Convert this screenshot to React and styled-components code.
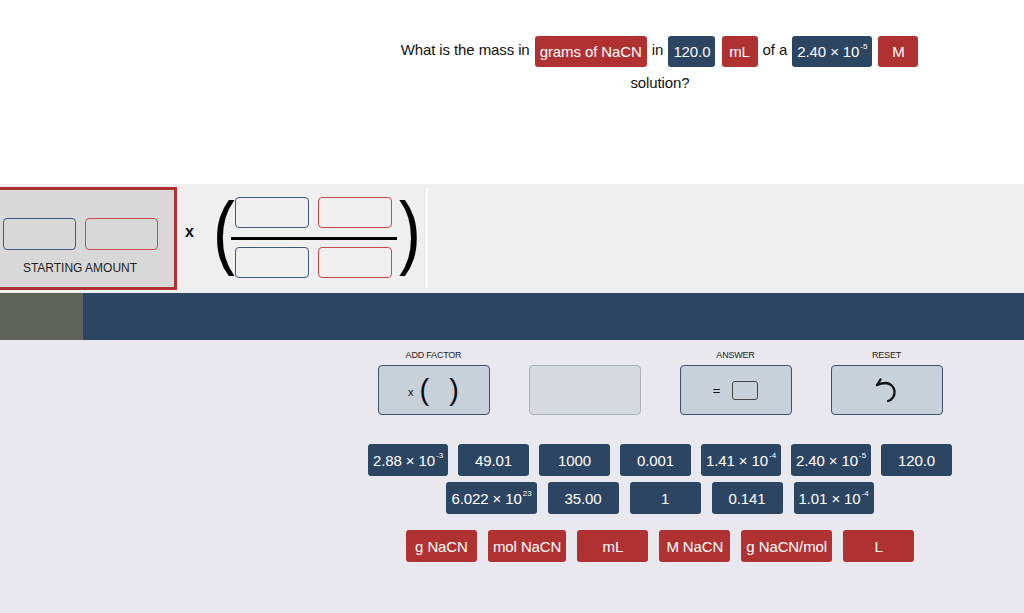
import React from "react";
import styled, { createGlobalStyle } from "styled-components";

const NAVY = "#2c4563";
const RED = "#b03132";

const GlobalStyle = createGlobalStyle`
  html, body {
    margin: 0;
    padding: 0;
    background: #ffffff;
    font-family: "Liberation Sans", Arial, sans-serif;
    color: #111;
  }
  * { box-sizing: border-box; }
`;

const Page = styled.div`
  width: 1024px;
  height: 613px;
  display: flex;
  flex-direction: column;
  overflow: hidden;
`;

const QuestionArea = styled.div`
  height: 184px;
  padding: 34px 0 0 296px;
  display: flex;
  justify-content: center;
`;

const Question = styled.div`
  width: 540px;
  text-align: center;
  font-size: 15px;
  line-height: 32px;
  letter-spacing: -0.1px;
`;

const Chip = styled.span`
  display: inline-block;
  vertical-align: middle;
  height: 31px;
  line-height: 31px;
  min-width: ${(p) => p.$min || 0}px;
  padding: 0 5px;
  margin: 0 1px;
  border-radius: 3px;
  color: #fff;
  background: ${(p) => (p.$red ? RED : NAVY)};
  text-align: center;
`;

const Sup = styled.sup`
  font-size: 8px;
  vertical-align: top;
  position: relative;
  top: -5px;
  margin-left: 1px;
`;

const Workspace = styled.div`
  height: 109px;
  background: #efefef;
  display: flex;
  align-items: flex-start;
`;

const StartBox = styled.div`
  margin: 3px 0 0 -3px;
  width: 180px;
  height: 103px;
  background: #d8d8d8;
  border: 3px solid ${RED};
  padding: 28px 14px 0 0;
  display: flex;
  flex-direction: column;
  align-items: center;
`;

const SlotRow = styled.div`
  display: flex;
  gap: 9px;
`;

const Slot = styled.div`
  width: ${(p) => p.$w || 73}px;
  height: ${(p) => p.$h || 32}px;
  border: 1px solid ${(p) => (p.$red ? "#c9494a" : "#3d5a7e")};
  border-radius: 4px;
`;

const StartLabel = styled.div`
  margin-top: 11px;
  font-size: 12px;
  color: #222;
`;

const Times = styled.div`
  margin: 39px 0 0 8px;
  font-size: 16px;
  font-weight: bold;
  color: #111;
`;

const Paren = styled.div`
  width: 20px;
  font-size: 82px;
  line-height: 82px;
  margin-top: 6px;
  text-align: center;
  transform: scaleX(0.8);
  color: #000;
`;

const Fraction = styled.div`
  margin-top: 13px;
  display: flex;
  flex-direction: column;
  align-items: center;
`;

const FracLine = styled.div`
  width: 166px;
  height: 3px;
  background: #000;
  margin: 9px 0 7px;
`;

const Divider = styled.div`
  width: 4px;
  height: 100px;
  margin: 4px 0 0 7px;
  background: #ffffff;
  border-left: 1px solid #e4e4e4;
`;

const DarkBar = styled.div`
  height: 47px;
  display: flex;
  background: ${NAVY};
`;

const DarkLeft = styled.div`
  width: 83px;
  background: #5e6259;
`;

const Tray = styled.div`
  flex: 1;
  background: #e9e8ee;
  padding: 9px 0 0 296px;
  display: flex;
  flex-direction: column;
  align-items: center;
`;

const Controls = styled.div`
  display: flex;
  gap: 39px;
`;

const Control = styled.div`
  width: 112px;
  display: flex;
  flex-direction: column;
  align-items: center;
`;

const ControlLabel = styled.div`
  height: 16px;
  font-size: 9px;
  letter-spacing: -0.2px;
  color: #222;
  line-height: 12px;
`;

const ActionButton = styled.div`
  width: 112px;
  height: 50px;
  border-radius: 4px;
  border: 1px solid ${(p) => (p.$disabled ? "#a9b1bd" : "#3e5169")};
  background: ${(p) => (p.$disabled ? "#d6dae0" : "#c8d0da")};
  display: flex;
  align-items: center;
  justify-content: center;
  color: #111;
`;

const SmallX = styled.span`
  font-size: 11px;
  margin: 3px 6px 0 0;
`;

const BtnParen = styled.span`
  font-size: 29px;
  line-height: 29px;
  margin-right: ${(p) => p.$gap || 0}px;
`;

const AnswerBox = styled.span`
  width: 26px;
  height: 19px;
  border: 1.5px solid #444;
  border-radius: 3px;
  margin-left: 12px;
`;

const Tiles = styled.div`
  margin-top: ${(p) => p.$top}px;
  display: flex;
  gap: ${(p) => p.$gap || 10}px;
  justify-content: center;
`;

const Tile = styled.div`
  height: 32px;
  min-width: 71px;
  padding: 0 5px;
  border-radius: 3px;
  background: ${(p) => (p.$red ? RED : NAVY)};
  color: #fff;
  font-size: 15px;
  letter-spacing: -0.1px;
  display: flex;
  align-items: center;
  justify-content: center;
  white-space: nowrap;
`;

const Sci = ({ m, e }) => (
  <>
    {m} × 10<Sup>{e}</Sup>
  </>
);

const row1 = [
  <Sci m="2.88" e="-3" />,
  "49.01",
  "1000",
  "0.001",
  <Sci m="1.41" e="-4" />,
  <Sci m="2.40" e="-5" />,
  "120.0",
];
const row2 = [<Sci m="6.022" e="23" />, "35.00", "1", "0.141", <Sci m="1.01" e="-4" />];
const units = ["g NaCN", "mol NaCN", "mL", "M NaCN", "g NaCN/mol", "L"];

const ResetIcon = () => (
  <svg width="26" height="28" viewBox="0 0 26 28" fill="none" stroke="#111" strokeWidth="2.3" strokeLinecap="round" strokeLinejoin="round">
    <path d="M3 9 6.5 3.5" />
    <path d="M3 9Q7 7 12 7A9.2 9.2 0 0 1 14 25" />
  </svg>
);

export default function App() {
  return (
    <Page>
      <GlobalStyle />
      <QuestionArea>
        <Question>
          What is the mass in <Chip $red>grams of NaCN</Chip> in <Chip>120.0</Chip>{" "}
          <Chip $red $min={36}>mL</Chip> of a <Chip><Sci m="2.40" e="-5" /></Chip>{" "}
          <Chip $red $min={40}>M</Chip> solution?
        </Question>
      </QuestionArea>

      <Workspace>
        <StartBox>
          <SlotRow>
            <Slot />
            <Slot $red />
          </SlotRow>
          <StartLabel>STARTING AMOUNT</StartLabel>
        </StartBox>
        <Times>x</Times>
        <Paren style={{ marginLeft: 17 }}>(</Paren>
        <Fraction>
          <SlotRow>
            <Slot $w={74} $h={31} />
            <Slot $w={74} $h={31} $red />
          </SlotRow>
          <FracLine />
          <SlotRow>
            <Slot $w={74} $h={31} />
            <Slot $w={74} $h={31} $red />
          </SlotRow>
        </Fraction>
        <Paren>)</Paren>
        <Divider />
      </Workspace>

      <DarkBar>
        <DarkLeft />
      </DarkBar>

      <Tray>
        <Controls>
          <Control>
            <ControlLabel>ADD FACTOR</ControlLabel>
            <ActionButton>
              <SmallX>x</SmallX>
              <BtnParen $gap={20}>(</BtnParen>
              <BtnParen>)</BtnParen>
            </ActionButton>
          </Control>
          <Control>
            <ControlLabel />
            <ActionButton $disabled />
          </Control>
          <Control>
            <ControlLabel>ANSWER</ControlLabel>
            <ActionButton>
              <span style={{ fontSize: 13 }}>=</span>
              <AnswerBox />
            </ActionButton>
          </Control>
          <Control>
            <ControlLabel>RESET</ControlLabel>
            <ActionButton>
              <ResetIcon />
            </ActionButton>
          </Control>
        </Controls>

        <Tiles $top={29}>
          {row1.map((t, i) => (
            <Tile key={i}>{t}</Tile>
          ))}
        </Tiles>
        <Tiles $top={6} $gap={11}>
          {row2.map((t, i) => (
            <Tile key={i}>{t}</Tile>
          ))}
        </Tiles>
        <Tiles $top={16} $gap={11}>
          {units.map((t, i) => (
            <Tile key={i} $red>
              {t}
            </Tile>
          ))}
        </Tiles>
      </Tray>
    </Page>
  );
}
